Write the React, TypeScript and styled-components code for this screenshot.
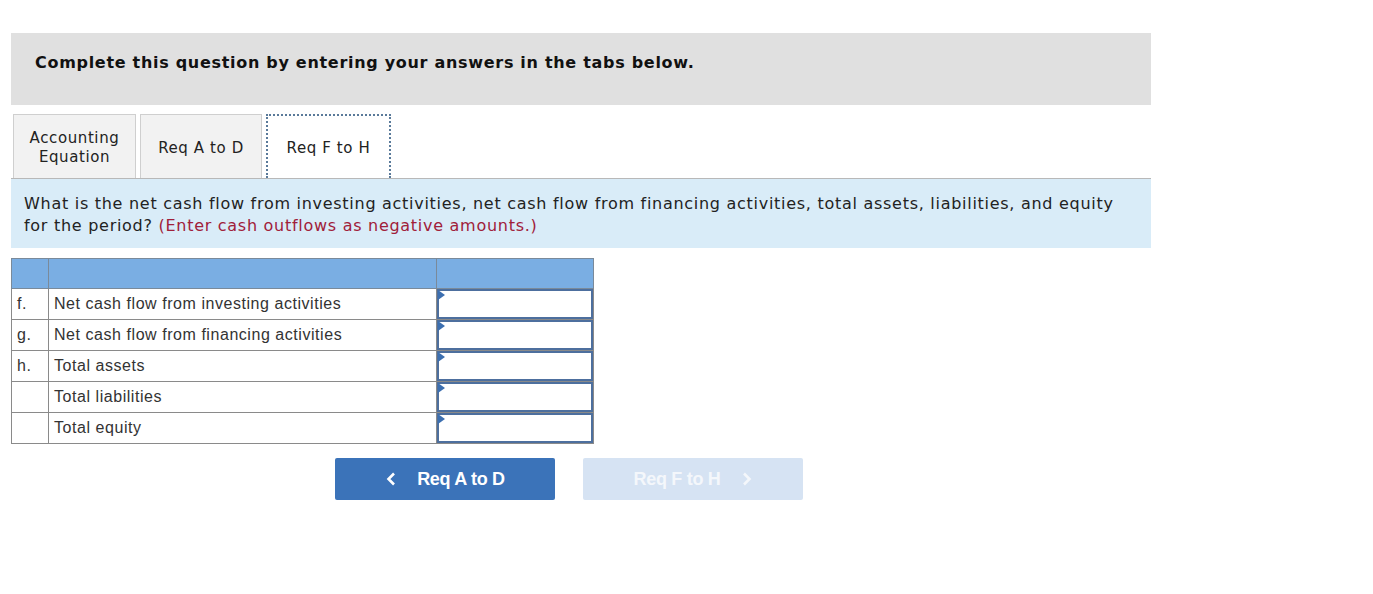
import styled, { createGlobalStyle } from "styled-components";

const GlobalStyle = createGlobalStyle`
  body {
    margin: 0;
    background: #fff;
    font-family: "DejaVu Sans", Verdana, sans-serif;
  }
`;

const Page = styled.div`
  padding: 33px 0 0 11px;
  width: 1140px;
`;

const Banner = styled.div`
  background: #e0e0e0;
  height: 72px;
  box-sizing: border-box;
  padding: 20px 24px 0;
  font-weight: bold;
  font-size: 16px;
  letter-spacing: 0.7px;
  color: #111;
  margin-bottom: 9px;
`;

const TabBar = styled.div`
  display: flex;
  gap: 4px;
  padding-left: 2px;
  border-bottom: 1px solid #b8b8b8;
`;

const Tab = styled.div<{ $active?: boolean; $w: number }>`
  width: ${(p) => p.$w}px;
  height: 64px;
  box-sizing: border-box;
  padding-top: 3px;
  display: flex;
  align-items: center;
  justify-content: center;
  text-align: center;
  font-size: 15px;
  letter-spacing: 0.6px;
  line-height: 19px;
  color: #222;
  background: ${(p) => (p.$active ? "#fff" : "#f2f2f2")};
  border: ${(p) => (p.$active ? "2px dotted #5a7a9a" : "1px solid #cfcfcf")};
  border-bottom: none;
`;

const Question = styled.div`
  background: #d9ecf8;
  height: 69px;
  box-sizing: border-box;
  padding: 14px 13px 0;
  font-size: 16px;
  letter-spacing: 0.72px;
  line-height: 22px;
  color: #222;
  margin-bottom: 10px;
`;

const Hint = styled.span`
  color: #a0203a;
`;

const Table = styled.table`
  border-collapse: collapse;
  font-family: "Liberation Sans", Arial, sans-serif;
  font-size: 16px;
  letter-spacing: 0.55px;
  color: #333;
`;

const HeadCell = styled.th<{ $w: number }>`
  background: #7aaee3;
  border: 1px solid #7a8a9a;
  height: 29px;
  width: ${(p) => p.$w}px;
  padding: 0;
`;

const Cell = styled.td<{ $w?: number }>`
  border: 1px solid #8a8a8a;
  height: 29px;
  padding: 0 5px;
  ${(p) => (p.$w ? `width: ${p.$w}px;` : "")}
`;

const InputCell = styled.td`
  border: 1px solid #8a8a8a;
  padding: 0;
  height: 29px;
`;

const AnswerBox = styled.div`
  height: 30px;
  box-sizing: border-box;
  border: 2px solid #4d6f9e;
  background: #fff;
  position: relative;
  &::before {
    content: "";
    position: absolute;
    left: -1px;
    top: -1px;
    border-top: 5px solid transparent;
    border-bottom: 5px solid transparent;
    border-left: 7px solid #3c6fb0;
  }
`;

const Nav = styled.div`
  display: flex;
  gap: 28px;
  padding: 14px 0 0 324px;
`;

const NavButton = styled.div<{ $disabled?: boolean }>`
  width: 220px;
  height: 42px;
  border-radius: 2px;
  background: ${(p) => (p.$disabled ? "#d6e3f3" : "#3b73b9")};
  color: ${(p) => (p.$disabled ? "#f4f7fb" : "#fff")};
  display: flex;
  align-items: center;
  justify-content: center;
  gap: 20px;
  font-family: "Liberation Sans", Arial, sans-serif;
  font-weight: bold;
  font-size: 18px;
  letter-spacing: -0.3px;
`;

const Chevron = ({ dir }: { dir: "left" | "right" }) => (
  <svg width="12" height="16" viewBox="0 0 12 16">
    <path
      d={dir === "left" ? "M9 2.5 L3.5 8 L9 13.5" : "M3 2.5 L8.5 8 L3 13.5"}
      fill="none"
      stroke="currentColor"
      strokeWidth="2.6"
    />
  </svg>
);

const rows = [
  { key: "f.", label: "Net cash flow from investing activities" },
  { key: "g.", label: "Net cash flow from financing activities" },
  { key: "h.", label: "Total assets" },
  { key: "", label: "Total liabilities" },
  { key: "", label: "Total equity" },
];

export default function App() {
  return (
    <>
      <GlobalStyle />
      <Page>
        <Banner>Complete this question by entering your answers in the tabs below.</Banner>
        <TabBar>
          <Tab $w={123}>
            Accounting
            <br />
            Equation
          </Tab>
          <Tab $w={122}>Req A to D</Tab>
          <Tab $w={125} $active>
            Req F to H
          </Tab>
        </TabBar>
        <Question>
          What is the net cash flow from investing activities, net cash flow from financing
          activities, total assets, liabilities, and equity for the period?{" "}
          <Hint>(Enter cash outflows as negative amounts.)</Hint>
        </Question>
        <Table>
          <thead>
            <tr>
              <HeadCell $w={36} />
              <HeadCell $w={387} />
              <HeadCell $w={156} />
            </tr>
          </thead>
          <tbody>
            {rows.map((r) => (
              <tr key={r.label}>
                <Cell $w={26}>{r.key}</Cell>
                <Cell>{r.label}</Cell>
                <InputCell>
                  <AnswerBox />
                </InputCell>
              </tr>
            ))}
          </tbody>
        </Table>
        <Nav>
          <NavButton>
            <Chevron dir="left" />
            Req A to D
          </NavButton>
          <NavButton $disabled>
            Req F to H
            <Chevron dir="right" />
          </NavButton>
        </Nav>
      </Page>
    </>
  );
}
